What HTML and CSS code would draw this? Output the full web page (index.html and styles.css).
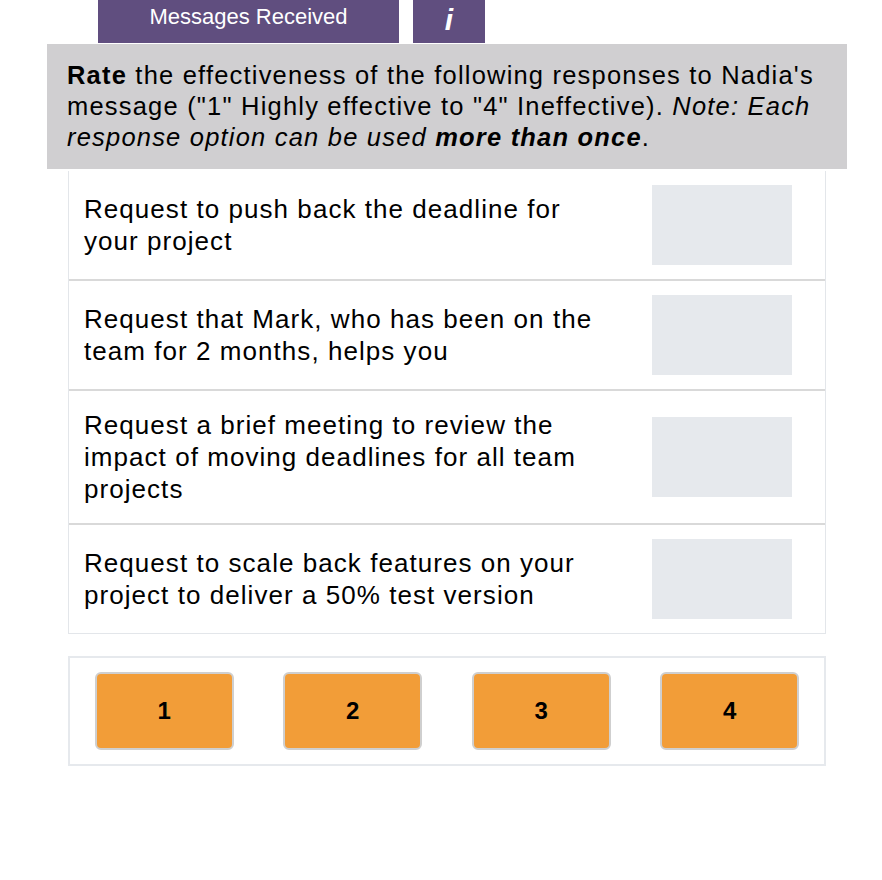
FILE: index.html
```html
<!DOCTYPE html>
<html lang="en">
<head>
  <meta charset="UTF-8" />
  <title>Rate Responses</title>
  <link rel="stylesheet" href="styles.css">
</head>
<body>
  <div class="tabs">
    <div class="tab tab-messages">Messages Received</div>
    <div class="tab tab-info">i</div>
  </div>
  <div class="prompt">
    <b>Rate</b> the effectiveness of the following responses to Nadia's message ("1" Highly effective to "4" Ineffective). <i>Note: Each response option can be used <b>more than once</b></i>.
  </div>
  <div class="responses">
    <div class="row">
      <div class="row-text">Request to push back the deadline for your project</div>
      <div class="drop"></div>
    </div>
    <div class="row">
      <div class="row-text">Request that Mark, who has been on the team for 2 months, helps you</div>
      <div class="drop"></div>
    </div>
    <div class="row">
      <div class="row-text">Request a brief meeting to review the impact of moving deadlines for all team projects</div>
      <div class="drop"></div>
    </div>
    <div class="row">
      <div class="row-text">Request to scale back features on your project to deliver a 50% test version</div>
      <div class="drop"></div>
    </div>
  </div>
  <div class="options">
    <div class="cell"><button class="opt">1</button></div>
    <div class="cell"><button class="opt">2</button></div>
    <div class="cell"><button class="opt">3</button></div>
    <div class="cell"><button class="opt">4</button></div>
  </div>
</body>
</html>
```

FILE: styles.css
```css
body {
  margin: 0;
  font-family: "Liberation Sans", Arial, sans-serif;
  color: #000;
  background: #fff;
}
.tabs {
  display: flex;
  gap: 14px;
  padding-left: 98px;
  height: 44px;
}
.tab {
  background: #604e7f;
  color: #fff;
  height: 43px;
  display: flex;
  justify-content: center;
  font-size: 22px;
  line-height: 34px;
}
.tab-messages {
  width: 301px;
}
.tab-info {
  width: 72px;
  font-weight: bold;
  font-style: italic;
  font-size: 30px;
  line-height: 40px;
}
.prompt {
  margin-left: 47px;
  width: 760px;
  background: #d0cfd1;
  padding: 16px 20px 15px 20px;
  font-size: 25.5px;
  letter-spacing: 1.2px;
  line-height: 31px;
  height: 94px;
}
.responses {
  margin: 2px 0 0 68px;
  width: 756px;
  border: 1px solid #e3e6ea;
  border-top: none;
}
.row {
  display: flex;
  align-items: center;
  justify-content: space-between;
  padding: 14px 33px 14px 15px;
  border-bottom: 2px solid #d9d9d9;
}
.row:last-child {
  border-bottom: none;
}
.row-text {
  width: 530px;
  font-size: 26px;
  letter-spacing: 1.05px;
  line-height: 32px;
  padding: 4px 0;
}
.drop {
  width: 140px;
  height: 80px;
  background: #e6e9ed;
}
.options {
  margin: 22px 0 0 68px;
  width: 754px;
  border: 2px solid #e6e9ed;
  padding: 14px 0 14px 0;
  display: grid;
  grid-template-columns: repeat(4, 1fr);
}
.cell {
  display: flex;
  justify-content: center;
}
.opt {
  width: 139px;
  height: 78px;
  background: #f29d38;
  border: 2px solid #cfcfcf;
  border-radius: 6px;
  font-family: "Liberation Sans", Arial, sans-serif;
  font-weight: bold;
  font-size: 24px;
  color: #000;
  cursor: pointer;
}
```
